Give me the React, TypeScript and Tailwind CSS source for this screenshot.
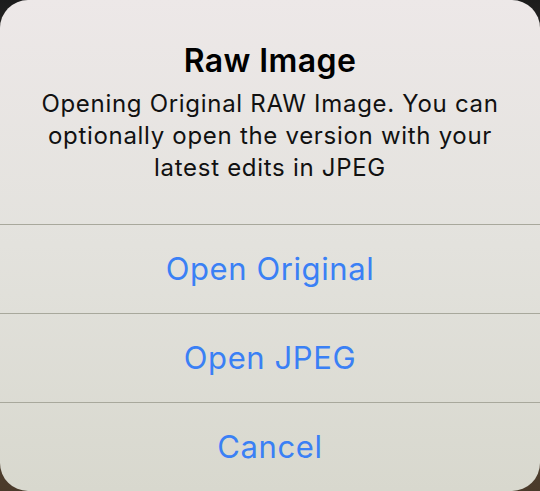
import React from 'react';

const actions = ['Open Original', 'Open JPEG', 'Cancel'];

export default function App() {
  return (
    <div className="h-[491px] w-[540px] overflow-hidden bg-gradient-to-b from-[#1c1c1c] via-[#6b6356] to-[#4a3a2a]" style={{ fontFamily: 'Inter, "Noto Sans", sans-serif' }}>
      <div className="flex h-full w-full flex-col overflow-hidden rounded-[28px] bg-gradient-to-b from-[#ede8e8] via-[#e3e2dd] to-[#d8d8ce]">
        {/* Header */}
        <div className="flex h-[224px] flex-col items-center px-4 pt-[42px] text-center">
          <h1 className="text-[32px] font-semibold leading-[38px] tracking-[0.4px] text-black">Raw Image</h1>
          <p className="mt-[8px] whitespace-nowrap text-[24px] leading-[32px] tracking-[0.7px] text-[#111]">
            Opening Original RAW Image. You can
            <br />
            optionally open the version with your
            <br />
            latest edits in JPEG
          </p>
        </div>

        {/* Actions */}
        {actions.map((label) => (
          <div key={label} className="flex flex-1 flex-col">
            <div className="h-px bg-[#a8a89c]" />
            <button className="flex flex-1 items-center justify-center text-[31px] tracking-[0.6px] text-[#3a80f5]">
              {label}
            </button>
          </div>
        ))}
      </div>
    </div>
  );
}
